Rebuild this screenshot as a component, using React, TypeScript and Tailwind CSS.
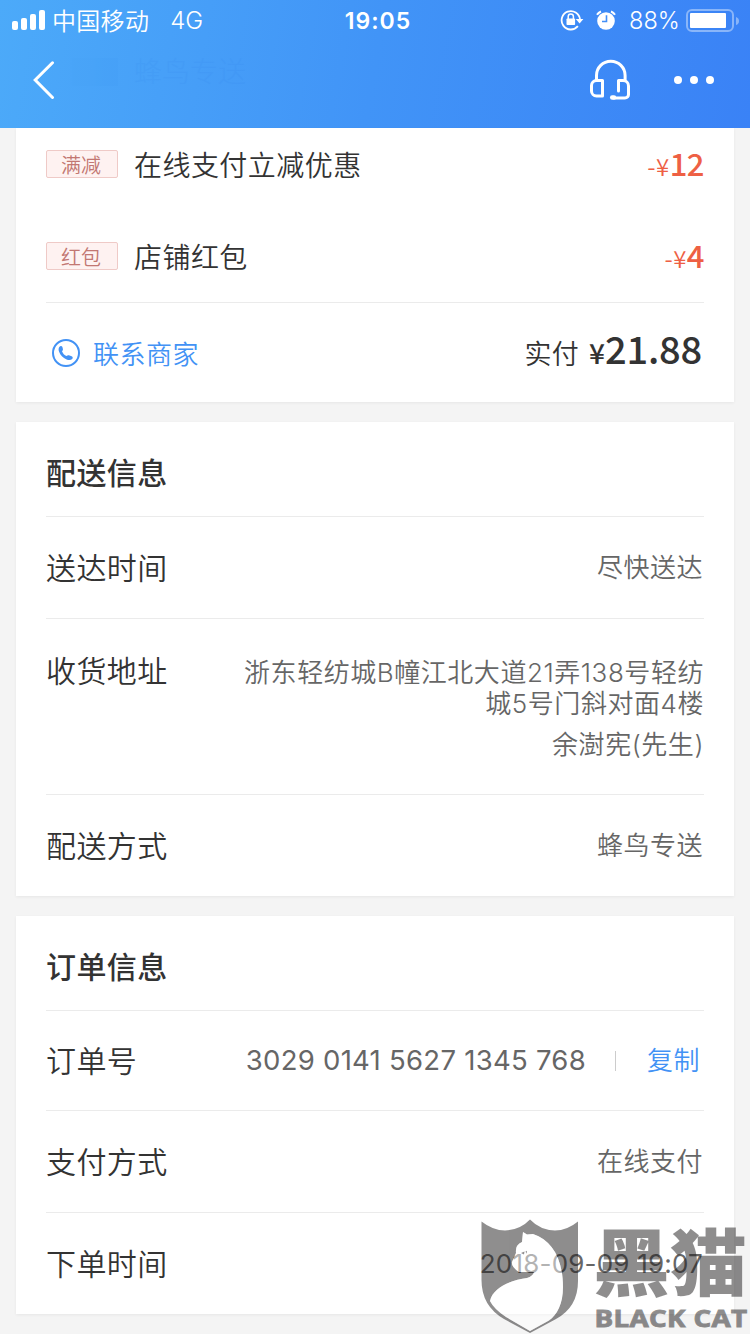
import type { ReactNode } from 'react';
import clsx from 'clsx';

function StatusBar() {
  return (
    <div className="relative flex h-[42px] items-center justify-between pl-3 pr-[11px] text-[24px] leading-10">
      <div className="flex items-center">
        <svg className="-mt-px" width="34" height="21" viewBox="0 0 34 21" fill="#fff">
          <rect x="0" y="11" width="6" height="9" rx="2" />
          <rect x="9" y="8" width="6" height="12" rx="2" />
          <rect x="18" y="4" width="6" height="16" rx="2" />
          <rect x="27" y="0" width="6" height="20" rx="2" />
        </svg>
        <span className="ml-[6px] pt-0.5 font-[350] tracking-[0.3px]">中国移动</span>
        <span className="ml-[21px] font-[350]">4G</span>
      </div>
      <span className="absolute left-1/2 ml-[3px] -translate-x-1/2 text-[23px] font-semibold tracking-[1px]">19:05</span>
      <div className="flex items-center">
        <svg className="-mt-0.5" width="24" height="22" viewBox="0 0 24 22" fill="none" stroke="#fff" strokeWidth="1.8">
          <path d="M17.900 17.200A9.200 9.200 0 1 1 20 10.400" />
          <path d="M15.800 10h7.600l-3.800 4.400z" fill="#fff" stroke="none" />
          <rect x="6.500" y="9.500" width="8.600" height="6.600" rx="0.800" fill="#fff" stroke="none" />
          <path d="M8.200 10V7.500a2.600 2.600 0 0 1 5.200 0V10" strokeWidth="1.500" />
        </svg>
        <svg className="-mt-[3px] ml-3" width="20" height="20" viewBox="0 0 20 20" fill="none">
          <circle cx="10" cy="11" r="8.800" fill="#fff" />
          <path d="M1 4.800A8 8 0 0 1 5 1.500M19 4.800a8 8 0 0 0-4-3.300" stroke="#fff" strokeWidth="2" />
          <path d="M10.500 5.200V11.500H6" stroke="#438ff7" strokeWidth="1.600" />
        </svg>
        <span className="ml-[13px] text-[23.500px] font-[350] tracking-[0.1px]">88%</span>
        <svg className="ml-[6px]" width="53" height="24" viewBox="0 0 53 24">
          <rect x="1" y="1" width="46" height="21" rx="5" fill="none" stroke="#fff" strokeOpacity="0.4" strokeWidth="2" />
          <rect x="4" y="4" width="36" height="15" rx="1" fill="#fff" />
          <path d="M50 8q3 1 3 4t-3 4z" fill="#fff" fillOpacity="0.4" />
        </svg>
      </div>
    </div>
  );
}

function Header() {
  return (
    <header className="h-32 bg-[linear-gradient(100deg,#4caaf9_0%,#4194f7_50%,#3a82f6_100%)] text-white">
      <StatusBar />
      <div className="relative flex h-[76px] items-center justify-between pl-[33px] pr-9">
        <svg width="22" height="38" viewBox="0 0 22 38" fill="none" stroke="#fff" strokeWidth="3" strokeLinecap="round">
          <path d="M19.500 1.800 2.200 19l17.300 17.500" />
        </svg>
        {/* row scrolled underneath the translucent bar */}
        <div className="absolute left-[70px] top-4 flex h-7 items-center text-[28px] font-light text-[#2b7de8] opacity-10">
          <span className="h-7 w-12 bg-[linear-gradient(90deg,transparent,#2b8bea)] opacity-60" />
          <span className="ml-4">蜂鸟专送</span>
        </div>
        <div className="flex items-center">
          <svg width="42" height="42" viewBox="0 0 42 42" fill="none" stroke="#fff" strokeWidth="3" strokeLinejoin="round" strokeLinecap="round">
            <path d="M6.500 21V16.500a14.300 14.300 0 0 1 28.600 0v4.500" />
            <path d="M12.500 21.500H6.500a5 5 0 0 0-5 5v5.500a5 5 0 0 0 5 5h6z" />
            <path d="M28.500 32V21.500h4.500a5.500 5.500 0 0 1 5.500 5.500v8.500a3.500 3.500 0 0 1-3.500 3.500H24" />
            <path d="M24 38.600h-1.800" strokeWidth="4.500" />
          </svg>
          <div className="ml-[42px] flex gap-2">
            <span className="size-2 rounded-full bg-white" />
            <span className="size-2 rounded-full bg-white" />
            <span className="size-2 rounded-full bg-white" />
          </div>
        </div>
      </div>
    </header>
  );
}

function Card({ children, className }: { children: ReactNode; className?: string }) {
  return (
    <section className={clsx('mx-4 bg-white px-[30px] shadow-[0_1px_3px_rgba(0,0,0,0.06)]', className)}>
      {children}
    </section>
  );
}

function Discount({ tag, label, amount, className }: { tag: string; label: string; amount: string; className: string }) {
  return (
    <div className={clsx('flex items-center', className)}>
      <span className="flex h-7 w-18 items-center justify-center rounded-[2px] border border-[#efcac7] bg-[#fef2f1] pr-0.5 pt-[3px] text-[20px] font-[350] leading-none text-[#c27772]">
        {tag}
      </span>
      <span className="ml-4 pt-[3px] text-[28px] font-[350] tracking-[0.45px]">{label}</span>
      <span className="-mt-0.5 ml-auto flex items-baseline font-['Noto_Sans_CJK_SC'] text-[#ee6044]">
        <span className="text-[24px] font-[350] tracking-[0.5px]">-¥</span>
        <span className="text-[31px] font-medium tracking-[-0.5px]">{amount}</span>
      </span>
    </div>
  );
}

function CardTitle({ children }: { children: ReactNode }) {
  return <h2 className="h-[94px] pt-1 text-[30px] font-medium leading-[94px] tracking-[0.4px]">{children}</h2>;
}

function Row({ label, children, className }: { label: string; children: ReactNode; className?: string }) {
  return (
    <div className={clsx('flex items-center justify-between border-t border-[#ebebeb]', className ?? 'h-[102px]')}>
      <span className="pt-px text-[30px] font-[350] tracking-[0.4px]">{label}</span>
      <div className="mr-px text-[26px] font-[350] tracking-[0.5px] text-[#666]">{children}</div>
    </div>
  );
}

// Translucent so that the row below stays readable
function Watermark() {
  return (
    <svg className="absolute left-[480px] top-[1216px]" width="270" height="118" viewBox="0 0 270 118">
      <g opacity="0.5" fill="#1f1d1e">
        <path
          fillRule="evenodd"
          d="M1.500 5.500Q13 14.500 25 14.500 40 14 50 3.500 60 14 75 14.500 87 14.500 98 5.500V65Q98 91 76 103L50 117 24 103Q1.500 90 1.500 64ZM43 16L47 18.500 53 18C72 24 83 43 83 71 83 88 77 99 69 104.500L50 115 26 101Q14 93 10 85C13 71 32 64 47 62Q53 60 54 56H39Q31 51 32 46L36 37Q35 29 42 26Z"
        />
        <text x="113" y="73.500" fontSize="73" fontWeight="900" textLength="154" lengthAdjust="spacingAndGlyphs" fontFamily="Noto Sans CJK SC, sans-serif">
          黑猫
        </text>
        <text x="114.500" y="110.500" fontSize="22.500" fontWeight="700" stroke="#1f1d1e" strokeWidth="0.900" letterSpacing="0.300" textLength="153" lengthAdjust="spacingAndGlyphs" fontFamily="Open Sans, sans-serif">
          BLACK CAT
        </text>
      </g>
      <path
        fill="#fff"
        fillOpacity="0.5"
        d="M43 16L47 18.500 53 18C72 24 83 43 83 71 83 88 77 99 69 104.500L50 115 26 101Q14 93 10 85C13 71 32 64 47 62Q53 60 54 56H39Q31 51 32 46L36 37Q35 29 42 26Z"
      />
      <path d="M41 37l3.500-1.500-.5 3zM45.500 35.500l1.500-.8-.5 3z" fill="#8f8d8e" />
    </svg>
  );
}

export default function App() {
  return (
    <div className="relative h-[1334px] w-[750px] overflow-hidden bg-[#f4f4f4] font-['Inter','Noto_Sans_CJK_SC',sans-serif] text-[#333]">
      <Header />

      <Card className="h-[274px]">
        <Discount className="h-[72px]" tag="满减" label="在线支付立减优惠" amount="12" />
        <Discount className="h-28" tag="红包" label="店铺红包" amount="4" />
        <div className="-mt-[10px] flex h-[100px] items-center justify-between border-t border-[#ebebeb]">
          <div className="flex items-center text-[#4292f5]">
            <svg className="ml-[5px]" width="30" height="30" viewBox="0 0 30 30" fill="none">
              <circle cx="15" cy="15" r="13" stroke="currentColor" strokeWidth="2" />
              <path
                d="M8.300 8.900c1-1.200 2.600-1.200 3.100.2l.5 2c.2 1-.2 1.500-.9 2.200.9 2.300 2.300 3.800 4.500 4.800.8-.8 1.500-1.100 2.400-.8l2.700.9c1.300.5 1.500 1.700.6 2.700-1.200 1.300-3.300 1.500-5.600.5-3.700-1.500-6.300-4.200-7.500-7.700-.7-1.900-.7-3.600.2-4.800z"
                fill="currentColor"
              />
            </svg>
            <span className="ml-3 pt-[3px] text-[26px] font-[350] tracking-[0.5px]">联系商家</span>
          </div>
          <div className="-mt-[11px] flex items-baseline">
            <span className="text-[27px] font-[350] tracking-[0.3px]">实付</span>
            <span className="ml-[10px] font-['Noto_Sans_CJK_SC'] text-[28px] font-medium">¥</span>
            <span className="mr-[2px] font-['Noto_Sans_CJK_SC'] text-[38px] font-medium tracking-[-0.2px]">21.88</span>
          </div>
        </div>
      </Card>

      <Card className="mt-5 h-[474px]">
        <CardTitle>配送信息</CardTitle>
        <Row label="送达时间">尽快送达</Row>
        <div className="flex h-[176px] justify-between border-t border-[#ebebeb]">
          <span className="pt-[30px] text-[30px] font-[350] tracking-[0.4px]">收货地址</span>
          <div className="pt-[38px] text-right text-[26px] font-[350] leading-[31px] tracking-[0.55px] text-[#666]">
            <p>
              浙东轻纺城B幢江北大道21弄138号轻纺
              <br />
              城5号门斜对面4楼
            </p>
            <p className="mt-[10px]">余澍宪(先生)</p>
          </div>
        </div>
        <Row label="配送方式">蜂鸟专送</Row>
      </Card>

      <Card className="mt-5 h-[398px]">
        <CardTitle>订单信息</CardTitle>
        <Row label="订单号" className="h-[100px]">
          <div className="flex items-center">
            <span className="text-[27.500px] font-normal tracking-[0.270px]">3029 0141 5627 1345 768</span>
            <span className="ml-[29px] h-5 w-px bg-[#ccc]" />
            <button className="ml-[31px] mr-[3px] text-[#4292f5]">复制</button>
          </div>
        </Row>
        <Row label="支付方式">在线支付</Row>
        <Row label="下单时间">
          <span className="font-normal tracking-[0.2px]">2018-09-09 19:07</span>
        </Row>
      </Card>

      <Watermark />
    </div>
  );
}
